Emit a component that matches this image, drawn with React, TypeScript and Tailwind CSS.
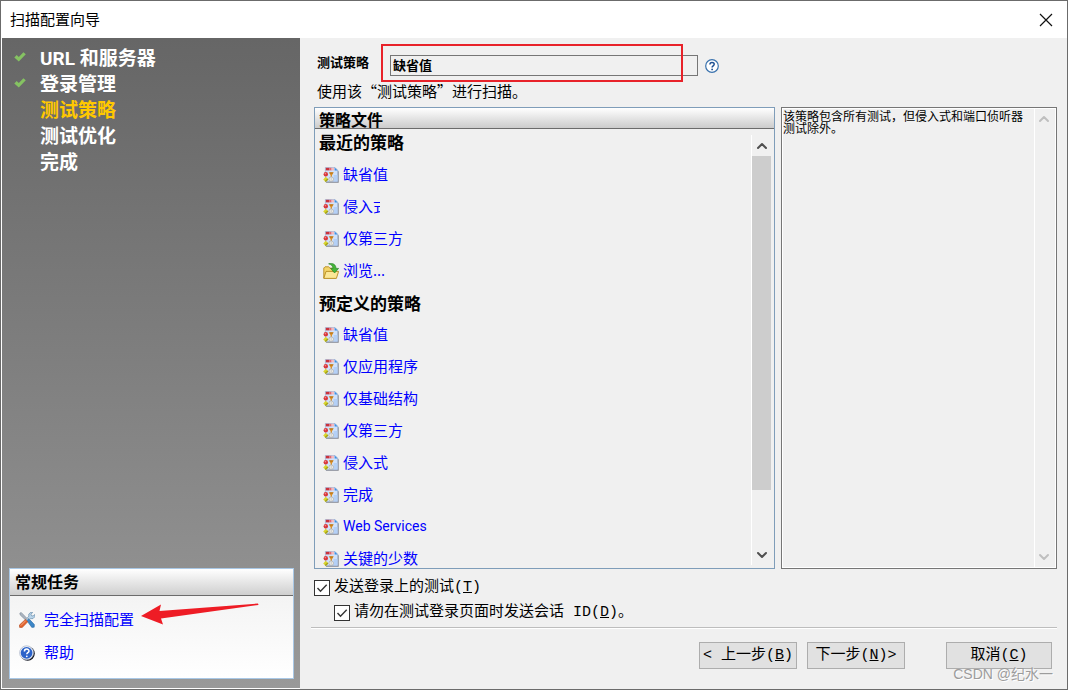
import { useState } from 'react';
import type { ReactNode } from 'react';
import { ChevronDown, ChevronUp } from 'lucide-react';

const steps = [
  { label: 'URL 和服务器', done: true },
  { label: '登录管理', done: true },
  { label: '测试策略', current: true },
  { label: '测试优化' },
  { label: '完成' },
];

const recentPolicies = ['缺省值', '侵入式', '仅第三方'];

const predefinedPolicies = [
  '缺省值',
  '仅应用程序',
  '仅基础结构',
  '仅第三方',
  '侵入式',
  '完成',
  'Web Services',
  '关键的少数',
];

function StepCheck() {
  return (
    <svg viewBox="0 0 12 10" className="h-[10px] w-3" aria-hidden="true">
      <path d="M0.3 5.4 L2.7 3 L4.8 5 L9.4 0.2 L11.8 2.2 L4.8 9.6 Z" fill="#85c262" />
    </svg>
  );
}

function PolicyIcon() {
  return (
    <svg viewBox="0 0 16 16" className="mt-[2px] size-4 shrink-0" aria-hidden="true">
      <path d="M3 1.4h9.5l3.2 3v11.4H3z" fill="#84868c" />
      <path d="M2.4 0.4h9.6l2.8 2.8v11.6H2.4z" fill="#cfe1fb" stroke="#8fa3c8" strokeWidth="0.6" />
      <path d="M10.6 8h3.8v6.4h-3.8z" fill="#b4d0f6" />
      <path d="M11.6 0.6v3h3z" fill="#3f8fe0" />
      <path d="M2.8 0.8h3.4v2.6H2.8z" fill="#c9323c" />
      <path d="M6.2 0.8h2.4v2.6H6.2z" fill="#e4686f" />
      <path d="M8.6 0.8h2.4v2.6H8.6z" fill="#f4b9bd" />
      <path d="M5.8 5.2h5L9 8.2v1.6H7.6V8.2z" fill="#dc9026" />
      <path d="M6.8 6h3" stroke="#a8660f" strokeWidth="0.8" />
      <circle cx="2.8" cy="7.2" r="2.2" fill="#d9373c" />
      <circle cx="2.4" cy="6.6" r="0.8" fill="#f08a8a" />
      <path d="M2.8 9.8l2.6 2.6-2.6 2.6L0.2 12.4z" fill="#d9d52a" />
      <path d="M4.4 11.4l1 1-2.6 2.6-1-1z" fill="#a3a01c" />
      <circle cx="8.2" cy="12.2" r="2.3" fill="#f0f0ea" stroke="#a3a5a8" strokeWidth="0.7" />
      <path d="M8.2 10.4v3.4" stroke="#bdbdbd" strokeWidth="0.8" />
    </svg>
  );
}

function FolderIcon() {
  return (
    <svg viewBox="0 0 16 16" className="mt-[2px] size-4 shrink-0" aria-hidden="true">
      <path d="M0.8 15V5l1.2-1.2h3.6L7 5.2h5.6V15z" fill="#f3d469" stroke="#b58a1e" strokeWidth="0.9" />
      <path d="M0.8 15.4L3 8.4h12.6l-2.2 7z" fill="#fbe796" stroke="#b58a1e" strokeWidth="0.9" />
      <path
        d="M5.6 0.8c4.4-1.2 7.4 0.8 7.4 4.6h2.6L11.6 10 7.6 5.4h2.4C9.8 3 8.4 1.6 5.6 0.8z"
        fill="#45b53a"
        stroke="#1f7a1c"
        strokeWidth="0.6"
      />
    </svg>
  );
}

function ToolsIcon() {
  return (
    <svg viewBox="0 0 16 16" className="size-4" aria-hidden="true">
      <path d="M0.8 1.2l1.4-0.8 6.2 6.4-1.4 1.6L1.2 3z" fill="#aab4bf" stroke="#6f7c8a" strokeWidth="0.5" />
      <path d="M7.8 8.6L9.8 6.6l5.6 6-0.2 2.6-2.4 0.2z" fill="#3d87c7" stroke="#1f5f9c" strokeWidth="0.5" />
      <path
        d="M10.2 7.4L8.4 5.6 9.8 4.2V2L12 0.2h1.6L12 2.4l0.6 1.4 1.6 0.2L15.8 2.4v2.4L14 6.6h-2.4z"
        fill="#b9d4ea"
        stroke="#527c9e"
        strokeWidth="0.6"
      />
      <path d="M6.4 7.4l2.4 2.4-5.6 5.8-2.6-0.2-0.2-2.4z" fill="#e0602a" stroke="#ad3f12" strokeWidth="0.5" />
      <path d="M6.8 8.6L1.8 13.6" stroke="#f7b08a" strokeWidth="0.9" />
    </svg>
  );
}

function HelpBadgeIcon() {
  return (
    <svg viewBox="0 0 16 16" className="size-4" aria-hidden="true">
      <circle cx="8.6" cy="8.6" r="7.2" fill="#10131c" />
      <circle cx="7.6" cy="7.8" r="7" fill="#f2f5fb" stroke="#9aa6bd" strokeWidth="0.6" />
      <circle cx="7.6" cy="7.8" r="5.9" fill="#2b62c9" />
      <path d="M5.4 6.4c0-3 4.6-3 4.6-0.4 0 1.6-2.2 1.7-2.2 3.2" fill="none" stroke="#fff" strokeWidth="1.5" />
      <circle cx="7.8" cy="11.3" r="0.9" fill="#fff" />
    </svg>
  );
}

function HelpRingIcon() {
  return (
    <svg viewBox="0 0 14 14" className="size-[14px]" aria-hidden="true">
      <circle cx="7" cy="7" r="6.3" fill="#fff" stroke="#3a72ad" strokeWidth="1.2" />
      <path d="M4.9 5.6c0-2.8 4.3-2.7 4.3-0.3C9.2 6.8 7.1 6.8 7.1 8.5" fill="none" stroke="#1d4f91" strokeWidth="1.5" />
      <circle cx="7.1" cy="10.4" r="0.9" fill="#1d4f91" />
    </svg>
  );
}

function PolicyLink({ icon, children, clipped }: { icon: ReactNode; children: string; clipped?: boolean }) {
  const base = 'leading-6 whitespace-nowrap text-[#0000ff]';
  const size = children === 'Web Services' ? "font-['Roboto',sans-serif] text-[14px]" : 'text-[15px]';
  return (
    <li className="flex h-8 items-center gap-1 pl-2">
      {icon}
      <a href="#" className={clipped ? `${base} ${size} w-[37px] overflow-hidden` : `${base} ${size}`}>
        {children}
      </a>
    </li>
  );
}

function Check({ id, children }: { id: string; children: ReactNode }) {
  const [checked, setChecked] = useState(true);
  return (
    <div className="flex h-[25px] items-center gap-1">
      <span className="grid size-4 shrink-0">
        <input
          id={id}
          type="checkbox"
          checked={checked}
          onChange={(e) => setChecked(e.target.checked)}
          className="col-start-1 row-start-1 size-4 appearance-none border border-[#333333] bg-white"
        />
        {checked && (
          <svg viewBox="0 0 16 16" className="pointer-events-none col-start-1 row-start-1 size-4" aria-hidden="true">
            <path d="M3.5 8l3 3.2 6.2-6.4" fill="none" stroke="#333" strokeWidth="1.4" />
          </svg>
        )}
      </span>
      <label
        htmlFor={id}
        className="font-['Liberation_Mono','Noto_Sans_CJK_SC',monospace] text-[15px] leading-5 whitespace-nowrap"
      >
        {children}
      </label>
    </div>
  );
}

function WizardButton({ children, wide }: { children: ReactNode; wide?: boolean }) {
  const base =
    "h-[27px] border border-[#adadad] bg-[#e1e1e1] font-['Liberation_Mono','Noto_Sans_CJK_SC',monospace] text-[15px] leading-5 whitespace-nowrap";
  return (
    <button type="button" className={wide ? `${base} w-[106px]` : `${base} w-[98px]`}>
      {children}
    </button>
  );
}

function Sidebar() {
  return (
    <aside className="flex w-[299px] shrink-0 flex-col justify-between border-b border-l border-white bg-linear-to-b from-[#666666] to-[#999999] pt-2 pr-[6px] pb-[9px] pl-[7px]">
      <ol className="font-['Roboto','Noto_Sans_CJK_SC',sans-serif] text-[19px] font-bold text-white">
        {steps.map((step) => (
          <li key={step.label} className="flex h-[26px]">
            <span className="w-[31px] pt-[6px] pl-[5px]">{step.done && <StepCheck />}</span>
            <span className={step.current ? 'leading-[26px] text-[#ffc800]' : 'leading-[26px]'}>{step.label}</span>
          </li>
        ))}
      </ol>

      <section className="h-[111px] border border-[#a9c8e6] bg-linear-to-b from-[#f0f0f0] to-white">
        <h2 className="h-[27px] border-b border-[#6b6b6b] bg-linear-to-b from-white to-[#cfcfcf] pl-[5px] text-[16px] leading-[26px] font-bold">
          常规任务
        </h2>
        <ul className="pt-[7px] pl-[9px] text-[15px] text-[#0000ff]">
          <li className="relative flex h-[33px] items-center gap-[9px]">
            <ToolsIcon />
            <a href="#">完全扫描配置</a>
            <svg viewBox="0 0 120 24" className="absolute top-0 left-[122px] h-6 w-[120px]" aria-hidden="true">
              <path d="M0 13L20 1.5 18.5 8 117 0.5 117.5 2 20 15.5 22 21.5z" fill="#ee1c25" />
            </svg>
          </li>
          <li className="flex h-[33px] items-center gap-[9px]">
            <HelpBadgeIcon />
            <a href="#">帮助</a>
          </li>
        </ul>
      </section>
    </aside>
  );
}

function PolicyList() {
  return (
    <section className="flex min-w-0 flex-1 flex-col border border-[#7f9db9]">
      <h2 className="h-[21px] shrink-0 border-b border-[#6b6b6b] bg-linear-to-b from-white to-[#cccccc] pl-1 text-[16px] leading-6 font-bold">
        策略文件
      </h2>
      <div className="flex min-h-0 flex-1">
        <div className="min-w-0 flex-1 overflow-hidden">
          <h3 className="h-[29px] pl-1 text-[17px] leading-7 font-bold">最近的策略</h3>
          <ul>
            {recentPolicies.map((name) => (
              <PolicyLink key={name} icon={<PolicyIcon />} clipped={name === '侵入式'}>
                {name}
              </PolicyLink>
            ))}
            <PolicyLink icon={<FolderIcon />}>浏览...</PolicyLink>
          </ul>
          <h3 className="h-8 pl-1 text-[17px] leading-9 font-bold">预定义的策略</h3>
          <ul>
            {predefinedPolicies.map((name) => (
              <PolicyLink key={name} icon={<PolicyIcon />}>
                {name}
              </PolicyLink>
            ))}
          </ul>
        </div>
        <div className="mt-[6px] mr-[3px] mb-[3px] flex w-5 flex-col border-l border-white text-[#505050]">
          <span className="flex h-[21px] items-center justify-center">
            <ChevronUp className="size-4" strokeWidth={3} />
          </span>
          <div className="min-h-0 flex-1">
            <div className="h-[86%] bg-[#cdcdcd]" />
          </div>
          <span className="flex h-[21px] items-center justify-center">
            <ChevronDown className="size-4" strokeWidth={3} />
          </span>
        </div>
      </div>
    </section>
  );
}

function Description() {
  return (
    <div className="flex w-[276px] shrink-0 border border-[#767676]">
      <div className="flex flex-1 border border-white">
        <textarea
          readOnly
          aria-label="策略描述"
          className="h-full min-w-0 flex-1 resize-none overflow-hidden pt-[2px] pr-2 text-[12px] leading-3 outline-none"
          defaultValue="该策略包含所有测试，但侵入式和端口侦听器测试除外。"
        />
        <div className="flex w-[21px] flex-col justify-between border-l border-white py-[2px] pl-px text-[#bfbfbf]">
          <ChevronUp className="size-4" strokeWidth={3} />
          <ChevronDown className="size-4" strokeWidth={3} />
        </div>
      </div>
    </div>
  );
}

export default function App() {
  return (
    <div className="relative flex h-screen flex-col border border-[#6b6b6b] bg-[#f0f0f0] font-['Noto_Sans','Noto_Sans_CJK_SC',sans-serif] text-black">
      <header className="flex h-[37px] shrink-0 items-center justify-between bg-white pr-[14px] pl-[9px]">
        <h1 className="text-[15px]">扫描配置向导</h1>
        <button type="button" aria-label="关闭">
          <svg viewBox="0 0 14 14" className="size-[14px]" aria-hidden="true">
            <path d="M1 1l12 12M13 1L1 13" stroke="#111" strokeWidth="1.2" />
          </svg>
        </button>
      </header>

      <div className="flex min-h-0 flex-1">
        <Sidebar />

        <main className="flex min-w-0 flex-1 flex-col pt-[17px] pr-[10px] pb-5 pl-[14px]">
          <div className="flex h-[21px] shrink-0 items-center pl-[3px]">
            <label htmlFor="policy" className="w-[73px] pb-[6px] text-[13px] font-bold">
              测试策略
            </label>
            <div className="relative w-[308px]">
              <input
                id="policy"
                readOnly
                defaultValue="缺省值"
                className="block h-[21px] w-full border border-[#767676] pb-[2px] pl-[2px] text-[13px] font-bold outline-none"
              />
              <span className="pointer-events-none absolute -top-[11px] -left-[9px] h-[38px] w-[302px] border-2 border-[#e8222a]" />
            </div>
            <button type="button" aria-label="帮助" className="ml-[7px]">
              <HelpRingIcon />
            </button>
          </div>

          <p className="mt-1 mb-[5px] shrink-0 pl-[3px] font-['Noto_Sans_CJK_SC',sans-serif] text-[15px] leading-[22px]">
            使用该“测试策略”进行扫描。
          </p>

          <div className="flex min-h-0 flex-1 gap-[6px]">
            <PolicyList />
            <Description />
          </div>

          <div className="mt-[6px] shrink-0">
            <Check id="login-tests">
              发送登录上的测试(<u>T</u>)
            </Check>
            <div className="pl-5">
              <Check id="session-ids">
                请勿在测试登录页面时发送会话 ID(<u>D</u>)。
              </Check>
            </div>
          </div>

          <hr className="mt-[2px] -ml-[3px] h-[2px] shrink-0 border-t border-b border-t-[#bdbdbd] border-b-white" />

          <div className="mt-[13px] flex shrink-0 justify-end gap-[10px] pr-[5px]">
            <WizardButton>
              &lt; 上一步(<u>B</u>)
            </WizardButton>
            <WizardButton>
              下一步(<u>N</u>)&gt;
            </WizardButton>
            <div className="flex pl-[31px]">
              <WizardButton wide>
                取消(<u>C</u>)
              </WizardButton>
            </div>
          </div>
        </main>
      </div>

      <span className="pointer-events-none absolute right-[14px] bottom-[5px] font-['Liberation_Sans','Noto_Sans_CJK_SC',sans-serif] text-[14px] leading-5 text-[#9c9c9c] [text-shadow:1px_1px_0_#ffffff]">
        CSDN @纪水一
      </span>
    </div>
  );
}
